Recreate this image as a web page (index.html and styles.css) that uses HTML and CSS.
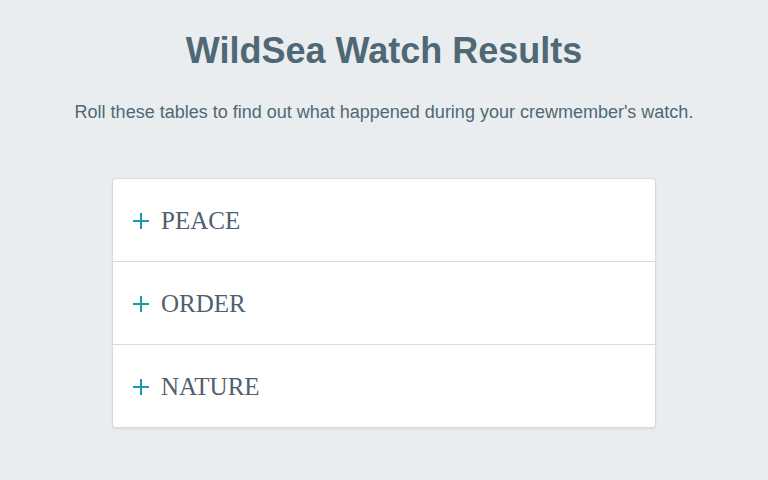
FILE: index.html
```html
<!DOCTYPE html>
<html>
<head>
<meta charset="utf-8">
<link rel="stylesheet" href="styles.css">
</head>
<body>
<main class="page">
  <h1 class="title">WildSea Watch Results</h1>
  <p class="lead">Roll these tables to find out what happened during your crewmember's watch.</p>
  <section class="accordion">
    <div class="row">
      <svg class="plus" width="16" height="16" viewBox="0 0 16 16"><path d="M8 0V16M0 8H16" stroke="currentColor" stroke-width="2"/></svg>
      <span class="label">PEACE</span>
    </div>
    <div class="row">
      <svg class="plus" width="16" height="16" viewBox="0 0 16 16"><path d="M8 0V16M0 8H16" stroke="currentColor" stroke-width="2"/></svg>
      <span class="label">ORDER</span>
    </div>
    <div class="row">
      <svg class="plus" width="16" height="16" viewBox="0 0 16 16"><path d="M8 0V16M0 8H16" stroke="currentColor" stroke-width="2"/></svg>
      <span class="label">NATURE</span>
    </div>
  </section>
</main>
</body>
</html>
```
FILE: styles.css
```css
html, body { margin: 0; padding: 0; }
body {
  background: #e9edf0;
  font-family: "Liberation Sans", Arial, sans-serif;
  width: 768px;
  height: 480px;
  overflow: hidden;
}
.page {
  display: flex;
  flex-direction: column;
  align-items: center;
  padding-top: 30px;
}
.title {
  margin: 0;
  font-size: 36px;
  line-height: 42px;
  font-weight: bold;
  color: #4f6875;
}
.lead {
  margin: 28px 0 0;
  font-size: 18px;
  line-height: 24px;
  color: #4f6875;
}
.accordion {
  margin-top: 54px;
  width: 542px;
  background: #fff;
  border: 1px solid #d6dbdf;
  border-radius: 3px;
  box-shadow: 0 1px 2px rgba(0,0,0,0.08);
}
.row {
  box-sizing: border-box;
  height: 82px;
  display: flex;
  align-items: center;
  gap: 12px;
  padding: 2px 0 0 20px;
  border-top: 1px solid #d6dbdf;
}
.row:first-child { border-top: none; height: 82px; }
.row + .row { height: 83px; }
.plus { color: #1a9ba6; flex: none; }
.label {
  font-family: "Liberation Serif", "Times New Roman", serif;
  font-size: 25px;
  color: #4f6070;
}
```
